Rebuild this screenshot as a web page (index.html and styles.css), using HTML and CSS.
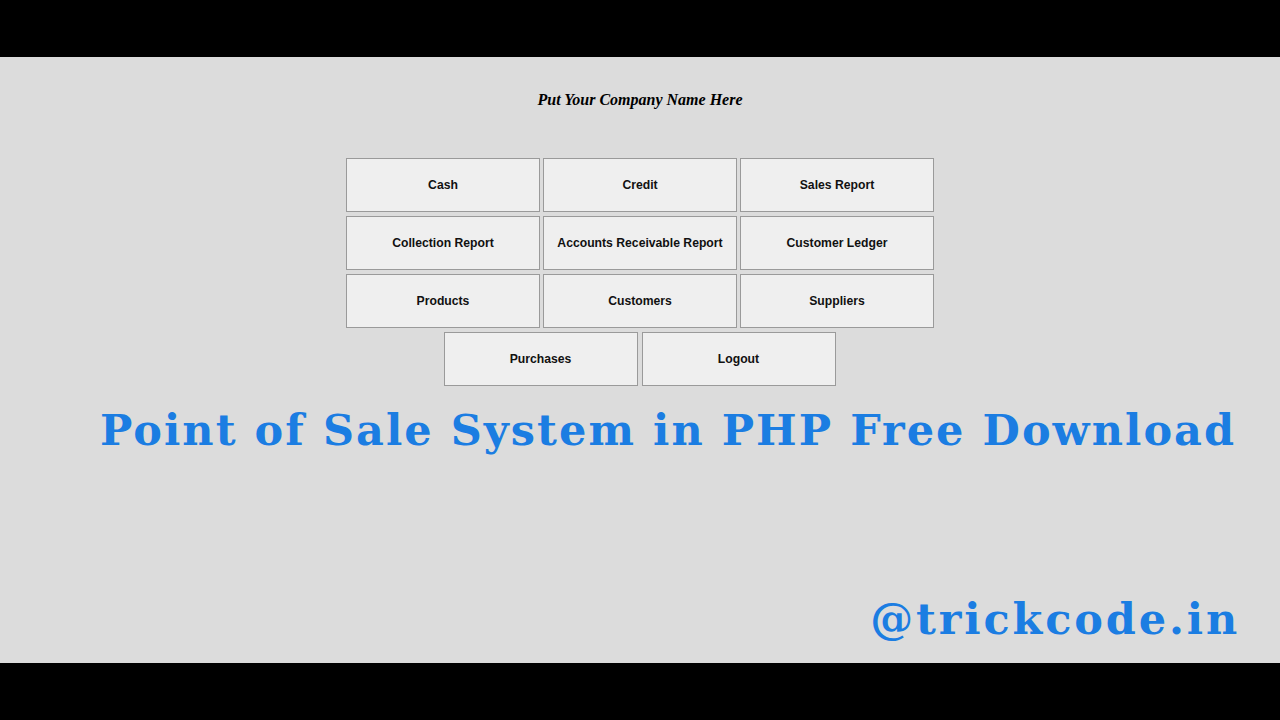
FILE: index.html
```html
<!DOCTYPE html>
<html>
<head>
<meta charset="utf-8">
<link rel="stylesheet" href="styles.css">
</head>
<body>
<div class="bar"></div>
<main class="stage">
  <h1 class="company">Put Your Company Name Here</h1>
  <div class="menu">
    <div class="row">
      <button class="btn">Cash</button>
      <button class="btn">Credit</button>
      <button class="btn">Sales Report</button>
    </div>
    <div class="row">
      <button class="btn">Collection Report</button>
      <button class="btn">Accounts Receivable Report</button>
      <button class="btn">Customer Ledger</button>
    </div>
    <div class="row">
      <button class="btn">Products</button>
      <button class="btn">Customers</button>
      <button class="btn">Suppliers</button>
    </div>
    <div class="row last">
      <button class="btn">Purchases</button>
      <button class="btn">Logout</button>
    </div>
  </div>
  <p class="headline">Point of Sale System in PHP Free Download</p>
  <p class="site">@trickcode.in</p>
</main>
<div class="bar bottom"></div>
</body>
</html>
```

FILE: styles.css
```css
html, body {
  margin: 0;
  padding: 0;
  background: #000;
  width: 1280px;
  height: 720px;
  overflow: hidden;
}
.bar {
  height: 57px;
  background: #000;
}
.stage {
  height: 606px;
  background: #dcdcdc;
  display: flex;
  flex-direction: column;
  box-sizing: border-box;
  padding-top: 33px;
}
.company {
  margin: 0;
  text-align: center;
  font-family: "Liberation Serif", serif;
  font-style: italic;
  font-weight: bold;
  font-size: 16px;
  line-height: 20px;
  color: #000;
}
.menu {
  margin-top: 48px;
  display: flex;
  flex-direction: column;
  align-items: center;
  gap: 4px;
}
.row {
  display: flex;
  gap: 3px;
}
.row.last {
  gap: 4px;
  padding-right: 1px;
}
.btn {
  width: 194px;
  height: 54px;
  box-sizing: border-box;
  background: #efefef;
  border: 1px solid #9a9a9a;
  font-family: "Liberation Sans", Arial, sans-serif;
  font-weight: bold;
  font-size: 12.2px;
  color: #111;
  padding: 0;
}
.headline {
  margin: 16px 0 0 0;
  padding-left: 100px;
  font-family: "DejaVu Serif", serif;
  font-weight: bold;
  font-size: 43px;
  line-height: 56px;
  letter-spacing: 2.05px;
  color: #1b7de2;
  white-space: nowrap;
}
.site {
  margin: 133px 0 0 0;
  padding-right: 40px;
  text-align: right;
  font-family: "DejaVu Serif", serif;
  font-weight: bold;
  font-size: 43px;
  line-height: 56px;
  letter-spacing: 2.85px;
  color: #1b7de2;
  white-space: nowrap;
}
```
